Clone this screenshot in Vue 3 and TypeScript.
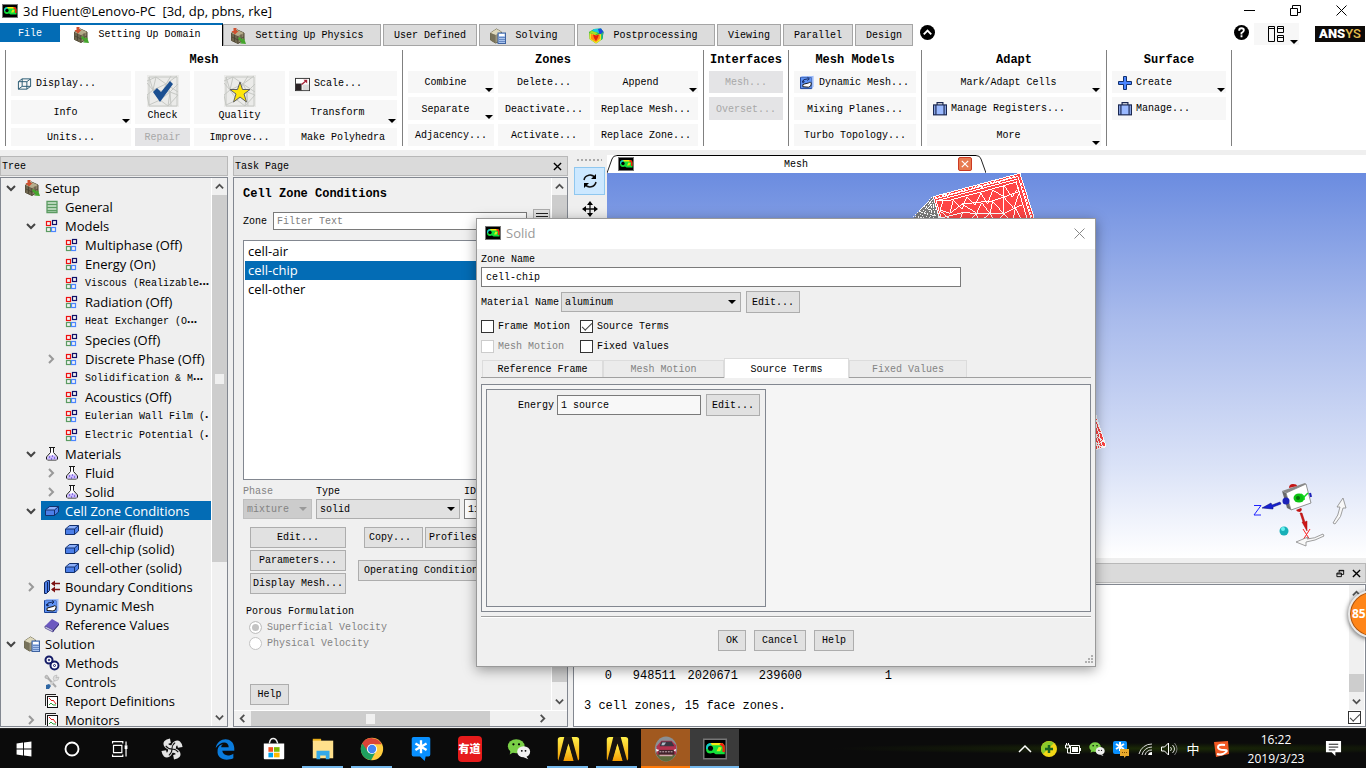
<script setup lang="ts">
import { ref } from 'vue'

interface RibbonButton { label: string; icon?: string; menu?: boolean; off?: boolean; big?: boolean }
interface RibbonGroup { title: string; kind: string; columns: RibbonButton[][] }
interface TreeRow { label: string; level: number; icon: string; state?: 'open' | 'closed'; dots?: string; selected?: boolean }

const tabs = [
  { label: 'Setting Up Physics', icon: 'setup', cls: 'physics' },
  { label: 'User Defined', icon: '', cls: 'user' },
  { label: 'Solving', icon: 'solution', cls: 'solving' },
  { label: 'Postprocessing', icon: 'post', cls: 'post' },
  { label: 'Viewing', icon: '', cls: 'viewing' },
  { label: 'Parallel', icon: '', cls: 'parallel' },
  { label: 'Design', icon: '', cls: 'design' },
]

const groups: RibbonGroup[] = [
  { title: 'Mesh', kind: 'mesh', columns: [
    [{ label: 'Display...', icon: 'wirebox' }, { label: 'Info', menu: true }, { label: 'Units...' }],
    [{ label: 'Check', icon: 'check', big: true }, { label: 'Repair', off: true }],
    [{ label: 'Quality', icon: 'quality', big: true }, { label: 'Improve...' }],
    [{ label: 'Scale...', icon: 'scale' }, { label: 'Transform', menu: true }, { label: 'Make Polyhedra' }],
  ] },
  { title: 'Zones', kind: 'zones', columns: [
    [{ label: 'Combine', menu: true }, { label: 'Separate', menu: true }, { label: 'Adjacency...' }],
    [{ label: 'Delete...' }, { label: 'Deactivate...' }, { label: 'Activate...' }],
    [{ label: 'Append', menu: true }, { label: 'Replace Mesh...' }, { label: 'Replace Zone...' }],
  ] },
  { title: 'Interfaces', kind: 'interfaces', columns: [[{ label: 'Mesh...', off: true }, { label: 'Overset...', off: true }]] },
  { title: 'Mesh Models', kind: 'models', columns: [[{ label: 'Dynamic Mesh...', icon: 'dynamic' }, { label: 'Mixing Planes...' }, { label: 'Turbo Topology...' }]] },
  { title: 'Adapt', kind: 'adapt', columns: [[{ label: 'Mark/Adapt Cells', menu: true }, { label: 'Manage Registers...', icon: 'case' }, { label: 'More', menu: true }]] },
  { title: 'Surface', kind: 'surface', columns: [[{ label: 'Create', icon: 'plus', menu: true }, { label: 'Manage...', icon: 'case' }]] },
]

const tree: TreeRow[] = [
  { label: 'Setup', level: 0, icon: 'setup', state: 'open' },
  { label: 'General', level: 1, icon: 'general' },
  { label: 'Models', level: 1, icon: 'models', state: 'open' },
  { label: 'Multiphase (Off)', level: 2, icon: 'models' },
  { label: 'Energy (On)', level: 2, icon: 'models' },
  { label: 'Viscous (Realizable', level: 2, icon: 'models', dots: '···' },
  { label: 'Radiation (Off)', level: 2, icon: 'models' },
  { label: 'Heat Exchanger (O', level: 2, icon: 'models', dots: '···' },
  { label: 'Species (Off)', level: 2, icon: 'models' },
  { label: 'Discrete Phase (Off)', level: 2, icon: 'models', state: 'closed' },
  { label: 'Solidification & M', level: 2, icon: 'models', dots: '···' },
  { label: 'Acoustics (Off)', level: 2, icon: 'models' },
  { label: 'Eulerian Wall Film (', level: 2, icon: 'models', dots: '·' },
  { label: 'Electric Potential (', level: 2, icon: 'models', dots: '·' },
  { label: 'Materials', level: 1, icon: 'flask', state: 'open' },
  { label: 'Fluid', level: 2, icon: 'flask', state: 'closed' },
  { label: 'Solid', level: 2, icon: 'flask', state: 'closed' },
  { label: 'Cell Zone Conditions', level: 1, icon: 'cell', state: 'open', selected: true },
  { label: 'cell-air (fluid)', level: 2, icon: 'cell' },
  { label: 'cell-chip (solid)', level: 2, icon: 'cell' },
  { label: 'cell-other (solid)', level: 2, icon: 'cell' },
  { label: 'Boundary Conditions', level: 1, icon: 'boundary', state: 'closed' },
  { label: 'Dynamic Mesh', level: 1, icon: 'dynamic' },
  { label: 'Reference Values', level: 1, icon: 'book' },
  { label: 'Solution', level: 0, icon: 'solution', state: 'open' },
  { label: 'Methods', level: 1, icon: 'methods' },
  { label: 'Controls', level: 1, icon: 'controls' },
  { label: 'Report Definitions', level: 1, icon: 'report' },
  { label: 'Monitors', level: 1, icon: 'report', state: 'closed' },
]

const zones = ['cell-air', 'cell-chip', 'cell-other']
const activeZone = ref('cell-chip')
const zoneName = ref('cell-chip')
const energy = ref('1 source')
const filterText = ref('')
const zoneId = ref('11')
const porous = ref('superficial')
const options = ref({ frame: false, source: true, mesh: false, fixed: false })
const scrollLock = ref(true)

const pages = [
  { label: 'Reference Frame', off: false },
  { label: 'Mesh Motion', off: true },
  { label: 'Source Terms', off: false },
  { label: 'Fixed Values', off: true },
]
const activePage = ref('Source Terms')

const apps = [
  { name: 'start', cls: 'sys' }, { name: 'cortana', cls: 'sys' }, { name: 'taskview', cls: 'sys' },
  { name: 'pinwheel', cls: 'wide' }, { name: 'edge', cls: '' }, { name: 'store', cls: '' },
  { name: 'folder', cls: 'running' }, { name: 'chrome', cls: 'running' }, { name: 'star', cls: '' },
  { name: 'youdao', cls: '' }, { name: 'wechat', cls: '' }, { name: 'ansys', cls: 'running' },
  { name: 'ansys', cls: 'running' }, { name: 'car', cls: 'alert' }, { name: 'fluent', cls: 'front' },
]
const tray = ['up', 'guard', 'battery', 'wechat', 'starchat', 'wifi', 'volume']
</script>

<template>
  <div class="desktop">
    <svg class="defs" aria-hidden="true">
      <defs>
        <linearGradient id="ansysGold" x1="0" y1="0" x2="0" y2="1"><stop offset="0" stop-color="#fff04a" /><stop offset="1" stop-color="#f39b00" /></linearGradient>
      </defs>
      <symbol id="i-fluent" viewBox="0 0 16 14"><rect width="16" height="14" fill="#777" /><rect x="1" y="1" width="14" height="12" fill="#000" /><path d="M2 7C2 4.500 3 3 6 3h6q2.500 0 2.500 3v4.500H8.500L7 9.500l-2 .5Q2 10 2 7z" fill="#14e03a" /><path d="M2 7C2 4 3 3 6 3l1 1Q3.500 4 3.500 7z" fill="#12c8c8" /><path d="M5 3h8v1.500H6z" fill="#f6ea12" /><path d="M12 3q2.500 0 2.500 3v3H13V5.500L11 4z" fill="#f5200c" /><path d="M10.500 5.500L9 8.500h2.500L12.500 6z" fill="#d9ee14" /><circle cx="5" cy="6.500" r="1.700" fill="#000" /></symbol>
      <symbol id="i-setup" viewBox="0 0 16 16"><path d="M1.500 5l6-3 6.500 3v7l-6 3.500-6.500-3z" fill="#8c8167" stroke="#4a432f" /><path d="M1.500 5l6.500 3v7.500l-6.500-3z" fill="#6d654e" /><path d="M1.500 5l6-3 6.500 3-6 3z" fill="#b6ad8c" /><path d="M8 8v7M2 9l6 3 6-3M4.500 6.500V14M11 6.500V13" stroke="#433d2c" fill="none" stroke-width=".7" /><path d="M3.500 0h3v3h2L5 6.500 1.500 3h2z" fill="#d0502f" /><path d="M9 9l4 2.500L14 10l2 6-6-.5 1.500-1.500L8 11z" fill="#45a52d" /></symbol>
      <symbol id="i-solution" viewBox="0 0 16 16"><path d="M.5 5l6-4 5 3v9l-6 2-5-3z" fill="#9b957c" stroke="#6b664d" /><path d="M.5 5l6-4 5 3-6 3z" fill="#ded9bc" /><path d="M5.500 7v8l-5-3V5z" fill="#77725a" /><rect x="8" y="5" width="7.500" height="10.500" fill="#a9c4ee" stroke="#3d62a0" /><path d="M9 7h5.500" stroke="#fff" stroke-width="2" /><path d="M9.500 9.500h5M9.500 11.500h5M9.500 13.500h5" stroke="#234e9b" stroke-dasharray="1 1" /></symbol>
      <symbol id="i-post" viewBox="0 0 16 16"><path d="M1 4l5-3 7-.5L15.500 4l-1 7L8 15.500 1.500 11z" fill="#25b648" /><path d="M6 1l7-.5L15.500 4 11 5 4 3z" fill="#18cbe0" /><path d="M10 1l3-.5L15.500 4l-1 6-3-4z" fill="#1c48d8" /><path d="M1 4l3-1 6 2-3 2z" fill="#a8e022" /><path d="M1.500 5L8 7l5-1v6l-5 3.500L1.500 11z" fill="#f3e41c" /><path d="M3 6l5 1.500 4-1v4L8 14l-5-3z" fill="#ff8a14" /><path d="M5 6.500l3 1 3-1-1 3-2 3.500-2-3z" fill="#e3200e" /><path d="M13 6l2-2-.5 7-1.500 1z" fill="#2bc76a" /></symbol>
      <symbol id="i-wirebox" viewBox="0 0 16 14"><path d="M1.500 4.500h9v8h-9zM5.500 1.500h9v8h-9zM1.500 4.500l4-3M10.500 4.500l4-3M1.500 12.500l4-3M10.500 12.500l4-3" fill="none" stroke="#24566f" /></symbol>
      <symbol id="i-net" viewBox="0 0 32 32"><rect width="32" height="32" fill="#ebebe9" /><path d="M0 6l9-4 10 7 11-8M2 2l4 13 13-6 12 8M0 20l6-5 7 10 6-16M2 30l11-5 8 6 10-11M0 20l2 10M13 25l10-8 8-8M9 2L6 15l17 2 1 14M23 17L19 9l5-8M2 2h28v29H2zM6 15L0 8M21 31l2-14M31 20l-8-3" fill="none" stroke="#c6c8c4" /></symbol>
      <symbol id="i-check" viewBox="0 0 32 32"><use href="#i-net" /><path d="M6 17l4-4 4 4L23 6l3 3-13 18z" fill="#1b4f91" /></symbol>
      <symbol id="i-quality" viewBox="0 0 32 32"><use href="#i-net" /><path d="M16 7l2.500 7.500H26l-6 4.500 2.500 8-6.500-5-6.500 5L12 19l-6-4.500h7.500z" fill="#ffe60a" stroke="#606060" /></symbol>
      <symbol id="i-scale" viewBox="0 0 16 14"><rect x=".5" y=".5" width="15" height="13" fill="#fff" stroke="#333" /><rect x="1" y="6" width="6" height="7" fill="#2a2224" /><rect x="8" y="7" width="7" height="6" fill="#dadada" /><path d="M7 7l5-4" stroke="#a32035" stroke-width="1.500" /><path d="M13 2v4L9 2z" fill="#a32035" /></symbol>
      <symbol id="i-dynamic" viewBox="0 0 16 16"><path d="M.5 2.500h12v12H.5z" fill="#5f93f5" stroke="#173f94" /><path d="M.5 2.500l2-1.500h12l-2 1.500zM12.500 2.500l2-2v12l-2 2z" fill="#9dbcfa" /><path d="M3 12.500q-1-3 2-3l4-1q3-2 3 1 0 3-3 3.500z" fill="#fff" stroke="#111" /><path d="M3 8l1-3 5-1M3 8L2.500 6M3 8l2-1M10 4L8 2.500M10 4L8 6" stroke="#14285c" fill="none" /></symbol>
      <symbol id="i-case" viewBox="0 0 12 12"><path d="M3.500 2.500v-2h5v2" fill="none" stroke="#1a2750" /><rect x=".5" y="2.500" width="11" height="8.500" fill="#9bbaff" stroke="#1a2750" /><path d="M2.500 2.500V11M9.500 2.500V11" stroke="#1a2750" /></symbol>
      <symbol id="i-plus" viewBox="0 0 14 14"><path d="M5.500.5h3v5h5v3h-5v5h-3v-5h-5v-3h5z" fill="#4b86ff" stroke="#12306e" /></symbol>
      <symbol id="i-general" viewBox="0 0 16 16"><path d="M3 2.500h10v11H3zM3 5.500h10M3 8.500h10M3 11.500h10" fill="#d3e8d4" stroke="#5b9b62" stroke-width="1.300" /></symbol>
      <symbol id="i-models" viewBox="0 0 16 16"><g fill="#f3f3f3" stroke-width="1.200"><rect x="2.500" y="3.500" width="4" height="4" stroke="#f01010" /><rect x="8.500" y="2.500" width="4" height="4" stroke="#101066" /><rect x="2.500" y="9.500" width="4" height="4" stroke="#5b9b62" /><rect x="7.500" y="9.500" width="4" height="4" stroke="#4b86ff" /></g></symbol>
      <symbol id="i-flask" viewBox="0 0 16 16"><path d="M6.500 2v4.500L2.500 11v2l1 1h9l1-1v-2l-4-4.500V2" fill="#fff" stroke="#1a1a1a" /><path d="M5 9.500h6l2 2v2H3v-2z" fill="#c9b8fb" /><path d="M5 1.500h6" stroke="#1a1a1a" /><path d="M5 11h1M8 10h1M10 12h1M7 13h1" stroke="#3a1ec8" /></symbol>
      <symbol id="i-cell" viewBox="0 0 16 16"><path d="M1.500 7l4-3.500h9V9l-4 3.500h-9z" fill="#4c7fe8" stroke="#12306e" /><path d="M2 7l4-3h8l-4 3z" fill="#8db0fa" /><path d="M10.500 7v5.500M1.500 7h9l4-3.500" stroke="#12306e" fill="none" /></symbol>
      <symbol id="i-boundary" viewBox="0 0 16 16"><path d="M.5 3.500l3-2h2v10l-3 3h-2z" fill="#4c7fe8" stroke="#10245c" /><path d="M3.500 3v10" stroke="#10245c" /><path d="M8 4.500h8M8 10.500h8" stroke="#7d1010" stroke-width="1.500" /><path d="M7 4.500l4-3v6zM7 10.500l4-3v6z" fill="#7d1010" /></symbol>
      <symbol id="i-book" viewBox="0 0 16 16"><path d="M1 9l7-7 7 4-6 7z" fill="#6b58c0" /><path d="M1 9l8 4v2l-8-4z" fill="#d9d9ee" stroke="#352a80" stroke-width=".7" /><path d="M9 13l6-7v2l-6 7z" fill="#352a80" /></symbol>
      <symbol id="i-methods" viewBox="0 0 16 16"><g fill="#fff" stroke="#141b66"><circle cx="5" cy="5" r="3.500" stroke-width="2" /><circle cx="5" cy="5" r=".8" /><circle cx="10.500" cy="10.500" r="4" stroke-width="2" /><circle cx="10.500" cy="10.500" r="1" /></g></symbol>
      <symbol id="i-controls" viewBox="0 0 16 16"><path d="M3 3l9 10" stroke="#aaa" stroke-width="2" /><path d="M1 2l2-1 2 3-1 1-3-1z" fill="#c4c4c4" stroke="#999" stroke-width=".5" /><path d="M14 3l-9 9" stroke="#d2d2d2" stroke-width="2" /><path d="M10 2l3-1-1 3 3-1-1 3-3 1-2-2z" fill="#ddd" stroke="#aaa" stroke-width=".5" /><path d="M2 11l3-1 2 2-2 3H2z" fill="#2f67a4" /></symbol>
      <symbol id="i-report" viewBox="0 0 16 16"><path d="M1.500 13V1.500H12" fill="none" stroke="#222" /><rect x="3.500" y="3.500" width="10" height="11" fill="#fff" stroke="#111" /><path d="M5 5l3 3 1-1 3 4" stroke="#e02020" fill="none" /><path d="M5 12l2-2 2 2h3" stroke="#31a13c" fill="none" /></symbol>
      <symbol id="i-start" viewBox="0 0 28 28"><path d="M6 8l7-1v6.500H6zM14 7l8-1v7.500h-8zM6 14.500h7V21l-7-1zM14 14.500h8V22l-8-1z" fill="#fff" /></symbol>
      <symbol id="i-cortana" viewBox="0 0 28 28"><circle cx="14" cy="14" r="7" fill="none" stroke="#fff" stroke-width="2" /></symbol>
      <symbol id="i-taskview" viewBox="0 0 28 28"><path d="M7 10h9v8H7zM6 8V6h11v2M6 20v2h11v-2M20.500 6v4M20.500 14v8" fill="none" stroke="#fff" stroke-width="1.300" /><rect x="19" y="10" width="3" height="4" fill="#fff" /></symbol>
      <symbol id="i-pinwheel" viewBox="0 0 28 28"><g fill="none" stroke="#e4e4e4" stroke-width="6"><path d="M12 3.500Q4 5 7 9.500q2 3 7 2.500" /><path d="M24.500 12Q23 4 18.500 7q-3 2-2.500 7" /><path d="M16 24.500q8-1.500 5-6-2-3-7-2.500" /><path d="M3.500 16q1.500 8 6 5 3-2 2.500-7" /></g><path d="M14 14Q9 14 6 10M14 14q0-5 4-8M14 14q5 0 8 4M14 14q0 5-4 8" fill="none" stroke="#111" stroke-width="1.300" /></symbol>
      <symbol id="i-edge" viewBox="0 0 28 28"><path d="M4 13C6 1 23 0 24 13v3H11c1 6 8 6 12 3v5C14 28 5 24 6 16c0-4 3-7 6-7-2 1-2 2-2 3h8C18 5 9 5 4 13z" fill="#0a7bdc" /></symbol>
      <symbol id="i-store" viewBox="0 0 28 28"><path d="M9 8c1-7 7-7 9 0" fill="none" stroke="#eee" stroke-width="1.500" /><path d="M3 8h22v16q0 1-1 1H4q-1 0-1-1z" fill="#fff" /><path d="M8 12h5v5H8z" fill="#f25022" /><path d="M14 12h6v5h-6z" fill="#7fba00" /><path d="M8 18h5v5H8z" fill="#00a4ef" /><path d="M14 18h6v5h-6z" fill="#ffb900" /></symbol>
      <symbol id="i-folder" viewBox="0 0 28 28"><path d="M3 3h9v3H3z" fill="#e9ae1a" /><path d="M3 5h22v19H3z" fill="#ffe08c" /><path d="M7 25v-9h14v9h-4v-4h-6v4z" fill="#33a9e8" /></symbol>
      <symbol id="i-chrome" viewBox="0 0 28 28"><circle cx="14" cy="14" r="12" fill="#ffcd40" /><path d="M14 14L3.500 8A12 12 0 0 0 13 26l5-9z" fill="#1fa05f" /><path d="M14 14l-4 3L3.500 8A12 12 0 0 1 24.500 9H14z" fill="#db4437" /><circle cx="14" cy="14" r="5.500" fill="#fff" /><circle cx="14" cy="14" r="4.500" fill="#4285f4" /></symbol>
      <symbol id="i-star" viewBox="0 0 28 28"><path d="M6 1h16q2 0 2 2v17q0 2-2 2h-3l-1 5-5-5H6q-2 0-2-2V3q0-2 2-2z" fill="#0990ff" /><path d="M14 4.500v14M8 8l12 7M20 8L8 15" stroke="#fff" stroke-width="2.500" /></symbol>
      <symbol id="i-wechat" viewBox="0 0 28 28"><ellipse cx="11" cy="11" rx="9" ry="7.500" fill="#79cf46" /><path d="M5 16l-1 4 5-3z" fill="#79cf46" /><ellipse cx="19" cy="17" rx="7" ry="6" fill="#f0f0f0" /><path d="M22 22l2 3-5-2z" fill="#f0f0f0" /><circle cx="8" cy="9" r="1.200" /><circle cx="14" cy="9" r="1.200" /><circle cx="17" cy="16" r="1" /><circle cx="21" cy="16" r="1" /></symbol>
      <symbol id="i-ansys" viewBox="0 0 28 28"><path d="M6 1h17q3 0 3 3v20q0 3-3 3H6q-3 0-3-3V4q0-3 3-3z" fill="url(#ansysGold)" /><path d="M10 1h8l7 26h-5L14.500 8 9 27H3.500z" fill="#171310" /><path d="M14.500 9l5 18H9.500z" fill="url(#ansysGold)" /></symbol>
      <symbol id="i-car" viewBox="0 0 28 28"><ellipse cx="14" cy="14" rx="12" ry="13.500" fill="#8a8f94" /><path d="M3 18h22q-3 9-11 9.500Q6 27 3 18z" fill="#5d6b3c" /><path d="M4 11l5-6h11l5 5v10H4z" fill="#b3324e" /><path d="M9 6h11l3 5H7z" fill="#3a3742" /><path d="M10 7h4l-2 3H9z" fill="#aebac6" /><path d="M6 15h17v5H6z" fill="#43232d" /><path d="M7 17h15" stroke="#d6c4c8" stroke-dasharray="2 1" /><path d="M3 14l4 1-3 2zM25 14l-3 1 2 2z" fill="#fff" /><path d="M7 21h14" stroke="#d0a8ae" stroke-width="1.500" /></symbol>
      <symbol id="i-up" viewBox="0 0 18 18"><path d="M3 12l6-6 6 6" fill="none" stroke="#fff" stroke-width="1.500" /></symbol>
      <symbol id="i-guard" viewBox="0 0 18 18"><circle cx="9" cy="9" r="8" fill="#f2d716" /><path d="M1 9a8 8 0 0 1 13-6L3 14q-2-2-2-5z" fill="#8ac92b" /><path d="M9 5v8M5 9h8" stroke="#176321" stroke-width="2.500" /></symbol>
      <symbol id="i-battery" viewBox="0 0 18 18"><path d="M6.500 5.500h9v8h-9zM16.500 8v3" fill="none" stroke="#fff" /><path d="M8 7h6v5H8z" fill="#fff" /><path d="M1.500 5h4v3h-4zM2.500 3v2M4.500 3v2M3.500 8v5h3" fill="none" stroke="#fff" /></symbol>
      <symbol id="i-starchat" viewBox="0 0 18 18"><rect x="1" y="1" width="14" height="13" rx="2" fill="#0990ff" /><path d="M8 2v9M4 4l8 5M12 4L4 9" stroke="#fff" stroke-width="2" /><path d="M8 9h9v7h-3l-2 2v-2H8z" fill="#e9a92b" /><path d="M10 12.500h5" stroke="#7b4b00" stroke-dasharray="1 1" /></symbol>
      <symbol id="i-wifi" viewBox="0 0 18 18"><g fill="none" stroke="#ddd"><path d="M3 14A13 13 0 0 1 16 4M6 15A10 10 0 0 1 16 7M9 15a7 7 0 0 1 7-5" /></g><path d="M12 15a4 4 0 0 1 4-3v3z" fill="#fff" /></symbol>
      <symbol id="i-volume" viewBox="0 0 18 18"><path d="M1.500 7h3l4-4v12l-4-4h-3z" fill="none" stroke="#fff" /><path d="M10.500 7q2 2 0 4M12.500 5q4 4 0 8" fill="none" stroke="#ddd" /><path d="M14.500 3q5 6 0 12" fill="none" stroke="#777" /></symbol>
      <symbol id="i-sogou" viewBox="0 0 18 18"><path d="M2 2l14-1 1 13-13 3z" fill="#f15a24" /><path d="M13 5Q6 4 6 7t6 3-1 4q-3 1-6 0" fill="none" stroke="#fff" stroke-width="2" /></symbol>
      <symbol id="i-x" viewBox="0 0 10 10"><path d="M1 1l8 8M9 1L1 9" stroke="currentColor" stroke-width="1.500" /></symbol>
      <symbol id="i-chev" viewBox="0 0 10 10"><path d="M1 3l4 4 4-4" fill="none" stroke="currentColor" stroke-width="2" /></symbol>
    </svg>

    <header class="titlebar">
      <svg class="app-icon"><use href="#i-fluent" /></svg>
      <h1>3d Fluent@Lenovo-PC&nbsp; [3d, dp, pbns, rke]</h1>
      <div class="win-buttons">
        <button aria-label="Minimize"><svg viewBox="0 0 11 11"><path d="M0 5.500h11" stroke="#000" /></svg></button>
        <button aria-label="Restore"><svg viewBox="0 0 11 11"><path d="M.5 3.500h7v7h-7zM2.500 3V.5h8v7H8" fill="none" stroke="#000" /></svg></button>
        <button aria-label="Close"><svg viewBox="0 0 11 11"><path d="M.5.5l10 10M10.500.5l-10 10" stroke="#000" /></svg></button>
      </div>
    </header>

    <nav class="tabs">
      <button class="file">File</button>
      <button class="tab current"><svg class="i16"><use href="#i-setup" /></svg>Setting Up Domain</button>
      <button v-for="t in tabs" :key="t.label" class="tab" :class="t.cls">
        <svg v-if="t.icon" class="i16"><use :href="'#i-' + t.icon" /></svg>{{ t.label }}
      </button>
      <button class="round" aria-label="Collapse ribbon"><svg viewBox="0 0 16 16"><circle cx="8" cy="8" r="8" /><path d="M4 10l4-4 4 4" fill="none" stroke="#fff" stroke-width="2" /></svg></button>
      <span class="grow"></span>
      <button class="round" aria-label="Help"><svg viewBox="0 0 16 16"><circle cx="8" cy="8" r="8" /><path d="M5.500 6q0-2.500 2.500-2.500t2.500 2Q10.500 7 8 8.500V10M8 11v2" fill="none" stroke="#fff" stroke-width="2" /></svg></button>
      <button class="layout menu" aria-label="Arrange"><svg viewBox="0 0 16 16"><path d="M.5.5h6v15h-6zM.5 2.500h6M9.500.5h6v6h-6zM9.500 9.500h6v6h-6zM9.500 2.500h6M9.500 11.500h6" fill="none" stroke="#000" /></svg></button>
      <span class="brand"><b>ANS</b><b class="gold">YS</b></span>
    </nav>

    <section class="ribbon">
      <div v-for="g in groups" :key="g.title" class="group" :class="g.kind">
        <h2>{{ g.title }}</h2>
        <div class="cols">
          <div v-for="(c, i) in g.columns" :key="i" class="col" :class="{ two: c[0].big }">
            <button v-for="b in c" :key="b.label" :disabled="b.off" :class="{ menu: b.menu, big: b.big, iconed: b.icon && !b.big }">
              <svg v-if="b.icon" :class="['ri', b.icon]"><use :href="'#i-' + b.icon" /></svg>{{ b.label }}
            </button>
          </div>
        </div>
      </div>
      <div class="group last"></div>
    </section>

    <main class="work">
      <aside class="tree-dock">
        <div class="dock-head"><span>Tree</span></div>
        <div class="tree-box">
          <ul>
            <li v-for="(r, i) in tree" :key="i" :class="['l' + r.level, { mono: r.dots, selected: r.selected }]">
              <span class="arrow" :class="r.state"><svg v-if="r.state"><use href="#i-chev" /></svg></span>
              <span class="node"><svg class="i16"><use :href="'#i-' + r.icon" /></svg><span class="t">{{ r.label }}<b v-if="r.dots">{{ r.dots }}</b></span></span>
            </li>
          </ul>
          <div class="vscroll"><svg class="flip"><use href="#i-chev" /></svg><i class="thumb grip tree-thumb"></i><svg><use href="#i-chev" /></svg></div>
        </div>
      </aside>

      <section class="task-dock">
        <div class="dock-head"><span>Task Page</span><button aria-label="Close task page"><svg><use href="#i-x" /></svg></button></div>
        <div class="task-box">
          <form class="task" @submit.prevent>
            <h2>Cell Zone Conditions</h2>
            <div class="filter"><label for="filter">Zone</label><input id="filter" v-model="filterText" placeholder="Filter Text"><button type="button" aria-label="List options"><svg viewBox="0 0 12 12"><path d="M0 1.500h12M0 4.500h12M0 7.500h12" stroke="#222" /></svg></button></div>
            <ul class="zones"><li v-for="z in zones" :key="z" :class="{ on: z === activeZone }" @click="activeZone = z">{{ z }}</li></ul>
            <div class="triple">
              <div class="f phase"><label for="phase">Phase</label><span class="sel off"><select id="phase" disabled><option>mixture</option></select></span></div>
              <div class="f type"><label for="type">Type</label><span class="sel"><select id="type"><option>solid</option></select></span></div>
              <div class="f"><label for="zid">ID</label><input id="zid" v-model="zoneId"></div>
            </div>
            <div class="actions">
              <div class="left"><button class="btn">Edit...</button><button class="btn">Parameters...</button><button class="btn">Display Mesh...</button></div>
              <div class="right"><div class="pair"><button class="btn copy">Copy...</button><button class="btn prof">Profiles...</button></div><button class="btn oper">Operating Conditions...</button></div>
            </div>
            <fieldset disabled>
              <legend>Porous Formulation</legend>
              <label><input v-model="porous" type="radio" name="porous" value="superficial"><span>Superficial Velocity</span></label>
              <label><input v-model="porous" type="radio" name="porous" value="physical"><span>Physical Velocity</span></label>
            </fieldset>
            <button class="btn help">Help</button>
          </form>
          <div class="vscroll"><svg class="flip"><use href="#i-chev" /></svg><i class="thumb task-thumb"></i><svg><use href="#i-chev" /></svg></div>
          <div class="hscroll"><svg class="toleft"><use href="#i-chev" /></svg><i class="thumb grip"></i><span class="grow"></span><svg class="toright"><use href="#i-chev" /></svg></div>
        </div>
      </section>

      <section class="right-side">
        <div class="graphics">
          <div class="view-tools">
            <span class="dots"></span>
            <button class="active" aria-label="Rotate view"><svg viewBox="0 0 16 16"><path d="M2 7a6 6 0 0 1 11-2M14 9a6 6 0 0 1-11 2" fill="none" stroke="#111" stroke-width="1.500" /><path d="M14 1v5H9zM2 15v-5h5z" /></svg></button>
            <button aria-label="Pan view"><svg viewBox="0 0 16 16"><path d="M8 2v12M2 8h12" stroke="#111" stroke-width="1.300" /><path d="M8 0l3 4H5zM8 16l3-4H5zM0 8l4-3v6zM16 8l-4-3v6z" /></svg></button>
          </div>
          <div class="view">
            <div class="view-tab">
              <svg class="edge" viewBox="0 0 10 18"><path d="M0 18L5 4q1-3.500 5-3.500V18z" fill="#fff" /><path d="M0 18L5 4q1-3.500 5-3.500" fill="none" stroke="#222" /></svg>
              <div class="mid"><svg class="app-icon"><use href="#i-fluent" /></svg><span>Mesh</span><button aria-label="Close Mesh"><svg><use href="#i-x" /></svg></button></div>
              <svg class="edge flipx" viewBox="0 0 10 18"><path d="M0 18L5 4q1-3.500 5-3.500V18z" fill="#fff" /><path d="M0 18L5 4q1-3.500 5-3.500" fill="none" stroke="#222" /></svg>
            </div>
            <div class="canvas">
              <svg class="model" viewBox="0 0 520 300" shape-rendering="crispEdges">
                <g transform="translate(193 -23) scale(.3333)" fill="none" stroke="#fff" stroke-width="3">
                  <path d="M398 140L330 215h90z" fill="#7b7b7b" stroke="none" />
                  <path d="M398 140L330 212M398 148l-52 64M398 156l-40 56M400 162l-28 50M402 168l-16 44M406 176l-6 36" stroke-dasharray="5 3" />
                  <path d="M386 155l18 15M372 170l36 18M358 185l54 14M345 200l60 8" stroke-dasharray="4 4" />
                  <path d="M400 140L660 70l46 145H418z" fill="#ff4545" stroke="none" />
                  <path d="M400 140L660 70M404 147L655 79M410 152L652 87M400 140l20 75M408 150l18 65M660 70l46 145M654 80l42 135M648 94l36 121" />
                  <path d="M406 143L650 78M664 100l36 115M403 150l20 65" stroke-dasharray="6 4" />
                  <path d="M412 153l38-2 30-9 38-10 32-8 33-9 32-9 33-10M430 150l-10 30 30 10 10-40 27 28 13-38 25 25 18-35 20 32 15-42 34 20 0-34 25 36 18-30" />
                  <path d="M420 182l20 18 47-12 43 2 40 0 40 2 34-18 24-10M450 190l37-28 43 28 15-32 25 32 8-36 32 36 2-48 30 34 14-45M487 162l58-6 33-3 34-12 44-16M412 205l28-5 30 15M487 188l-8 27M487 188l43 2-24 25M530 190l4 25M570 190l-30 25M570 190l14 25M612 192l-22 23M612 192l24 23M646 174l-8 41M646 174l22 41" />
                  <path d="M430 132l16 10M482 118l16 10M534 105l16 10M586 91l16 10" />
                  <path d="M886 790l32 98-32 12z" fill="#ff4545" stroke="none" />
                  <path d="M886 790l32 98-32 12M886 815l22 76M886 845l14 50M886 870l8 27M886 805l18 40-18 12 26 16-26 12 28 8" />
                </g>
              </svg>
              <svg class="triad" viewBox="0 0 100 70">
                <path d="M29 12l4 2 5 17-4-2z" fill="#6b6b6b" /><path d="M29 12l23-8 1 1-20 9z" fill="#8a8a8a" /><path d="M33 14l20-9 5 19-20 7z" fill="#fff" stroke="#777" stroke-width=".8" /><path d="M36 9q0-4 4-4t4 2zM43 31l5-2q2 2-1 4-3 0-4-2z" fill="#c31515" /><ellipse cx="46" cy="19" rx="5.500" ry="4.500" fill="#0cc412" /><circle cx="45" cy="19" r="2" fill="#05730a" /><path d="M48 15l3 3 4-4M51 18v3" fill="none" stroke="#10d81a" stroke-width="1.500" /><path d="M57 14l1 4" stroke="#1c22b8" stroke-width="2" />
                <circle cx="33" cy="22" r="3.500" fill="#1c22b8" /><path d="M9 29l9-5 1 2 8-3 1 2-8 3v2z" fill="#1520d0" stroke="#0b0b72" stroke-width=".5" /><path d="M1 26.500h7L1 36h7" fill="none" stroke="#1c20ff" /><path d="M47 34h2l3 9 2-1v10l-5-9 1 0z" fill="#cf1717" stroke="#a50d0d" stroke-width=".5" /><path d="M50 50l7 11M57 50l-7 11" stroke="#ff2020" />
                <circle cx="31" cy="52" r="4.500" fill="#18b0b8" /><circle cx="30" cy="50" r="2" fill="#66f0f0" /><path d="M80 44q6-8 7-16h-3l6-9 3 10h-3q-1 9-8 16zM70 55q-9 5-16 5l1-2-12 5 10 4v-4q9-1 18-6z" fill="#f8f8f8" stroke="#888" stroke-width=".8" />
              </svg>
            </div>
          </div>
        </div>
        <div class="console">
          <div class="dock-head"><span></span><button aria-label="Float console"><svg viewBox="0 0 10 10"><path d="M1 4.500h5v4H1zM1 5.500h5M3.500 4V1.500h5V6H6M3 2h6" fill="none" stroke="#000" /></svg></button><button aria-label="Close console"><svg><use href="#i-x" /></svg></button></div>
          <div class="console-box">
            <div class="log">
              <table><tbody><tr><td>0</td><td>948511</td><td>2020671</td><td>239600</td><td>1</td></tr></tbody></table>
              <p>3 cell zones, 15 face zones.</p>
            </div>
            <div class="side"><div class="vscroll"><svg class="flip"><use href="#i-chev" /></svg><i class="thumb console-thumb"></i><svg><use href="#i-chev" /></svg></div><input v-model="scrollLock" type="checkbox" aria-label="Scroll to end"></div>
          </div>
        </div>
      </section>
    </main>

    <section class="dialog" role="dialog" aria-labelledby="dlg-title">
      <header><svg class="app-icon"><use href="#i-fluent" /></svg><h2 id="dlg-title">Solid</h2><button aria-label="Close dialog"><svg viewBox="0 0 11 11"><path d="M.5.5l10 10M10.500.5l-10 10" stroke="#888" /></svg></button></header>
      <form class="dlg-body" @submit.prevent>
        <label class="zn" for="zone-name">Zone Name</label>
        <input id="zone-name" v-model="zoneName">
        <div class="mat"><label for="material">Material Name</label><span class="sel"><select id="material"><option>aluminum</option></select></span><button class="btn">Edit...</button></div>
        <div class="checks">
          <label><input v-model="options.frame" type="checkbox"><span>Frame Motion</span></label>
          <label><input v-model="options.source" type="checkbox"><span>Source Terms</span></label>
          <label class="dim"><input v-model="options.mesh" type="checkbox" disabled><span>Mesh Motion</span></label>
          <label><input v-model="options.fixed" type="checkbox"><span>Fixed Values</span></label>
        </div>
        <div class="pages"><button v-for="p in pages" :key="p.label" type="button" :disabled="p.off" :class="{ on: p.label === activePage }" @click="activePage = p.label">{{ p.label }}</button></div>
        <div class="panel"><div class="inner"><label for="energy">Energy</label><input id="energy" v-model="energy" readonly><button class="btn">Edit...</button></div></div>
        <hr>
        <div class="dlg-buttons"><button class="btn">OK</button><button class="btn">Cancel</button><button class="btn">Help</button></div>
      </form>
      <svg class="resize" viewBox="0 0 9 9"><path d="M7 1h2M4 4h2M7 4h2M1 7h2M4 7h2M7 7h2" stroke="#b0b0b0" stroke-width="2" /></svg>
    </section>

    <div class="badge">85</div>

    <footer class="taskbar">
      <button v-for="(a, i) in apps" :key="i" :class="a.cls" :aria-label="a.name">
        <span v-if="a.name === 'youdao'" class="youdao">有道</span>
        <svg v-else :class="a.name"><use :href="'#i-' + a.name" /></svg>
      </button>
      <span class="grow"></span>
      <div class="tray">
        <svg v-for="t in tray" :key="t"><use :href="'#i-' + t" /></svg>
        <span class="ime">中</span>
        <svg class="sogou"><use href="#i-sogou" /></svg>
      </div>
      <div class="clock"><span>16:22</span><span>2019/3/23</span></div>
      <button class="notes" aria-label="Notifications"><svg viewBox="0 0 18 18"><path d="M1 1h16v12h-6v4l-4-4H1z" fill="#fff" /><path d="M4 4.500h10M4 7.500h10M4 10.500h7" stroke="#111" /></svg></button>
    </footer>
  </div>
</template>

<style>
body { margin: 0; overflow: hidden; }
</style>

<style scoped>
.desktop { position: relative; display: flex; flex-direction: column; height: 100vh; overflow: hidden; background: #efefef; color: #000; font: 10px/14px "Liberation Mono", "Noto Sans CJK SC", monospace; }
.desktop *, .desktop *::after, .desktop *::before { box-sizing: border-box; }
.defs { position: absolute; width: 0; height: 0; }
button, input, select { font: inherit; color: inherit; margin: 0; padding: 0; border: 0; border-radius: 0; background: none; }
h1, h2, ul, p, hr, fieldset, legend { margin: 0; padding: 0; border: 0; font-weight: normal; list-style: none; }
svg { display: block; flex: none; }
.grow { flex: 1; }
.i16 { width: 16px; height: 16px; }
.app-icon { width: 16px; height: 14px; }

.titlebar { display: flex; align-items: center; height: 23px; background: #fff; padding: 0 2px 2px; }
.titlebar h1 { flex: 1; margin-left: 5px; font: 13px/20px "Open Sans", sans-serif; }
.win-buttons { display: flex; }
.win-buttons button { display: flex; justify-content: center; width: 46px; }
.win-buttons svg { width: 11px; height: 11px; }

.tabs { display: flex; align-items: flex-start; height: 23px; background: #fff; }
.tabs .file { width: 60px; height: 19px; padding-top: 2px; background: #036cb5; color: #fff; }
.tab { display: flex; align-items: center; justify-content: center; gap: 9px; height: 22px; margin: 1px 2px 0 0; padding-top: 1px; background: #dcdcdc; border: 1px solid #a5a5a5; white-space: nowrap; }
.tab.current { height: 23px; width: 163px; margin: 0; padding: 0 8px 2px 0; background: #fff; border: 0; border-top: 2px solid #036cb5; border-right: 1px solid #000; }
.physics { width: 158px; padding-right: 10px; }
.user { width: 94px; }
.solving { width: 96px; padding-right: 6px; }
.tab.post { width: 138px; padding-right: 6px; }
.viewing { width: 64px; }
.parallel { width: 70px; }
.design { width: 58px; }
.round { width: 15px; height: 15px; margin: 2px 5px; }
.round svg { width: 15px; height: 15px; }
.layout { width: 45px; height: 22px; padding-left: 14px; background: #f7f7f7; }
.layout svg { width: 16px; height: 16px; }
.brand { width: 50px; height: 16px; margin: 3px 1px 0 16px; background: #0d0a08; color: #fff; text-align: center; font: 900 13px/16px "Roboto", sans-serif; }
.brand .gold { color: #e6bd4c; font-weight: 500; }

.menu { position: relative; }
.menu::after { content: ""; position: absolute; right: 1px; bottom: 1px; border: 4px solid transparent; border-top-color: #000; border-bottom: 0; }

.ribbon { display: flex; height: 104px; padding: 4px 0 4px 5px; background: #fff; }
.group { padding: 0 5px; border-left: 1px solid #808080; }
.group h2 { height: 21px; text-align: center; font: bold 12px/20px "Liberation Mono", monospace; white-space: nowrap; margin: 0 -4px; }
.cols { display: grid; gap: 4px; }
.col { display: grid; gap: 4px; grid-template-rows: 22px 23px 22px; }
.mesh .col { grid-template-rows: 25px 24px 18px; }
.mesh .col.two { grid-template-rows: 53px 18px; }
.mesh .cols { grid-template-columns: 120px 55px 91px 108px; }
.zones .cols { grid-template-columns: 86px 92px 104px; }
.interfaces .cols { grid-template-columns: 74px; }
.models .cols { grid-template-columns: 122px; }
.adapt .cols { grid-template-columns: 174px; }
.surface .cols { grid-template-columns: 114px; }
.col button { display: flex; align-items: center; justify-content: center; padding-top: 2px; background: #f7f7f7; white-space: nowrap; }
.col button.menu { padding-right: 11px; }
.col button.iconed { justify-content: flex-start; gap: 4px; padding-left: 6px; padding-top: 1px; }
.col button.big { flex-direction: column; gap: 2px; }
.col button:disabled { background: #e4e4e6; color: #a8a8a8; }
.ri { width: 14px; height: 14px; }
.ri.check, .ri.quality { width: 32px; height: 32px; }
.ri.wirebox { width: 15px; height: 14px; }
.ri.scale, .ri.dynamic { width: 15px; height: 15px; }

.work { display: flex; flex: 1; min-height: 0; gap: 5px; padding: 6px 0 1px; }
.dock-head { display: flex; align-items: center; height: 20px; padding: 0 5px 0 1px; background: #dadada; border: 1px solid #b8b8b8; }
.dock-head span { flex: 1; padding-top: 1px; }
.dock-head button { margin-left: 7px; }
.dock-head svg { width: 9px; height: 9px; }
.tree-dock { display: flex; flex-direction: column; width: 228px; gap: 1px; }
.tree-box { display: flex; flex: 1; min-height: 0; border: 1px solid #828790; }
.tree-box ul { flex: 1; overflow: hidden; }
.tree-box li { display: flex; align-items: center; height: 19px; font: 13px/18px "Open Sans", sans-serif; white-space: nowrap; }
.tree-box li.mono { font: 10px/16px "Liberation Mono", monospace; }
.mono .t { display: flex; padding-top: 2px; }
.mono b { font: bold 12px/16px "Noto Sans", sans-serif; }
.l1 { padding-left: 20px; }
.l2 { padding-left: 40px; }
.arrow { flex: none; width: 20px; padding-left: 5px; color: #444; }
.arrow svg { width: 10px; height: 10px; }
.arrow.closed svg { transform: rotate(-90deg); color: #999; }
.node { display: flex; flex: 1; align-items: center; height: 19px; gap: 5px; padding-left: 3px; }
.selected .node { background: #036cb5; color: #fff; }

.vscroll { display: flex; flex-direction: column; align-items: center; flex: none; width: 16px; padding: 4px 0; background: #f0f0f0; color: #505050; border-left: 1px solid #fff; }
.vscroll svg, .hscroll svg { width: 9px; height: 9px; }
.flip { transform: rotate(180deg); }
.thumb { display: flex; align-items: center; justify-content: center; background: #cdcdcd; }
.vscroll .thumb { width: 15px; margin: 4px 0 auto; }
.grip::after { content: ""; width: 9px; height: 10px; background: #f0f0f0; }
.tree-thumb { height: 68%; }
.task-thumb { height: 487px; }
.vscroll .console-thumb { height: 18px; margin: auto 0 5px; }
.hscroll { display: flex; align-items: center; height: 16px; padding: 0 20px 0 4px; background: #f0f0f0; border-top: 1px solid #fff; grid-column: 1 / 3; color: #505050; }
.hscroll .thumb { width: 239px; height: 15px; margin-left: 4px; }
.toleft { transform: rotate(90deg); }
.toright { transform: rotate(-90deg); }

.task-dock { display: flex; flex-direction: column; width: 335px; gap: 1px; }
.task-box { display: grid; grid-template: 1fr 16px / 1fr 16px; flex: 1; min-height: 0; border: 1px solid #828790; }
.task { overflow: hidden; padding: 0 0 0 9px; background: #f0f0f0; min-width: 0; }
.task h2 { height: 30px; font: bold 12px/32px "Liberation Mono", monospace; }
.filter { display: flex; align-items: center; height: 18px; margin-top: 4px; white-space: nowrap; }
.filter label { width: 30px; padding-top: 1px; }
.filter input { width: 254px; height: 18px; padding: 1px 3px 0; background: #fff; border: 1px solid #7a7a7a; }
.filter input::placeholder { color: #808080; opacity: 1; }
.filter button { width: 17px; height: 24px; margin-left: 6px; padding: 0 0 6px 2px; background: #e1e1e1; border: 1px solid #adadad; }
.filter svg { width: 12px; height: 12px; }
.task .zones { width: 300px; height: 240px; margin-top: 10px; padding: 1px; background: #fff; border: 1px solid #828790; }
.task .zones li { padding-left: 3px; font: 13px/19px "Open Sans", sans-serif; }
.task .zones li.on { background: #036cb5; color: #fff; }
.triple { display: flex; gap: 4px; height: 40px; }
.f label { display: block; height: 19px; line-height: 24px; }
.f input { width: 50px; height: 20px; padding: 1px 0 0 3px; background: #fff; border: 1px solid #7a7a7a; }
.phase { width: 69px; color: #838383; }
.type { width: 144px; }
.sel { position: relative; display: block; height: 20px; }
.sel::after { content: ""; position: absolute; right: 5px; top: 8px; border: 4px solid transparent; border-top: 4px solid #000; border-bottom: 0; pointer-events: none; }
.sel.off::after { border-top-color: #999; }
.sel select { appearance: none; width: 100%; height: 100%; padding: 1px 0 0 3px; background: #e1e1e1; border: 1px solid #adadad; opacity: 1; }
.sel.off select { background: #ccc; border-color: #bfbfbf; color: #838383; }
.btn { height: 21px; padding-top: 1px; background: #e1e1e1; border: 1px solid #adadad; white-space: nowrap; }
.actions { display: flex; gap: 12px; margin: 7px 0 0 7px; }
.left { display: flex; flex-direction: column; gap: 2px; width: 96px; }
.right { display: flex; flex-direction: column; gap: 12px; }
.pair { display: flex; gap: 2px; padding-left: 6px; }
.copy { width: 59px; text-align: left; padding-left: 4px; }
.prof { width: 74px; }
.oper { width: 150px; }
.task fieldset { margin: 9px 0 0 3px; padding-left: 3px; }
.task legend { height: 16px; margin-left: -3px; line-height: 18px; }
.task fieldset label { display: flex; align-items: center; gap: 5px; height: 16px; color: #838383; }
.task fieldset label span { padding-top: 2px; }
.task fieldset input { appearance: none; width: 13px; height: 13px; border: 1px solid #c3c3c3; border-radius: 50%; background: #fff; }
.task fieldset input:checked { border: 1px solid #c3c3c3; background: #c3c3c3; box-shadow: inset 0 0 0 2px #fff; }
.btn.help { width: 39px; margin: 33px 0 0 7px; }

.right-side { display: flex; flex-direction: column; flex: 1; min-width: 0; gap: 5px; }
.graphics { display: flex; flex: 1; min-height: 0; margin-top: -1px; }
.view-tools { width: 34px; padding: 4px 2px 0 1px; }
.dots { display: block; height: 8px; margin: 0 3px; background: radial-gradient(circle at 1px 1px, #aaa 1px, transparent 1px) 0 0 / 4px 12px repeat-x; }
.view-tools button { display: flex; align-items: center; justify-content: center; width: 31px; height: 28px; }
.view-tools .active { background: #cce8ff; border: 1px solid #8fc7ef; }
.view-tools svg { width: 16px; height: 16px; }
.view { display: flex; flex-direction: column; flex: 1; min-width: 0; }
.view-tab { display: flex; height: 18px; background: #fff; }
.view-tab .edge { width: 10px; height: 18px; }
.flipx { transform: scaleX(-1); }
.mid { display: flex; align-items: center; width: 359px; padding: 0 3px 2px 1px; border-top: 1px solid #000; }
.mid span { flex: 1; text-align: center; padding-top: 3px; }
.mid button { width: 14px; height: 14px; margin-right: 1px; padding: 2px; background: #e77a50; border: 1px solid #cc3a22; border-radius: 2px; color: #fff; }
.mid button svg { width: 8px; height: 8px; }
.canvas { position: relative; flex: 1; min-height: 0; overflow: hidden; background: linear-gradient(#6b8ce0, #a9bbec 38%, #dae2f7 76%, #fff); }
.model { position: absolute; left: 0; top: 0; width: 520px; height: 300px; }
.triad { position: absolute; right: 13px; bottom: 5px; width: 100px; height: 78px; }
.console { height: 164px; display: flex; flex-direction: column; gap: 1px; }
.console .dock-head { padding-right: 4px; }
.console-box { display: flex; flex: 1; border: 1px solid #828790; background: #fff; font-size: 12px; line-height: 15px; }
.log { flex: 1; padding: 84px 0 0 10px; }
.log table { border-collapse: collapse; table-layout: fixed; }
.log td { padding: 0; text-align: right; }
.log td:nth-child(1) { width: 28px; }
.log td:nth-child(2) { width: 64px; }
.log td:nth-child(3) { width: 62px; }
.log td:nth-child(4) { width: 64px; }
.log td:nth-child(5) { width: 90px; }
.log p { margin-top: 15px; }
.side { display: flex; flex-direction: column; width: 17px; align-items: flex-start; }
.side .vscroll { flex: 1; }
input[type="checkbox"] { appearance: none; flex: none; width: 13px; height: 13px; background: #fff; border: 1px solid #333; }
input[type="checkbox"]:disabled { border-color: #ccc; }
input[type="checkbox"]:checked::after { content: ""; display: block; width: 10px; height: 5px; margin: 2px 0 0 1px; border: solid #444; border-width: 0 0 1px 1px; transform: rotate(-45deg); }
.side input { margin: 1px 0 2px; }

.dialog { position: absolute; left: 476px; top: 218px; width: 620px; background: #f0f0f0; border: 1px solid #999; box-shadow: 0 3px 12px rgba(0, 0, 0, .38); }
.dialog header { display: flex; align-items: center; height: 30px; padding: 0 10px 2px 8px; background: #fff; }
.dialog h2 { flex: 1; margin-left: 5px; color: #999; font: 13px/20px "Open Sans", sans-serif; }
.dialog header button svg { width: 11px; height: 11px; }
.dlg-body { padding: 0 4px 15px; }
.zn { display: block; height: 18px; line-height: 21px; }
#zone-name { display: block; width: 480px; height: 20px; padding: 1px 0 0 4px; background: #fff; border: 1px solid #7a7a7a; }
.mat { display: flex; align-items: center; margin-top: 4px; }
.mat label { width: 80px; padding-top: 2px; }
.mat .sel { width: 180px; margin-right: 5px; }
.mat .btn, .inner .btn { width: 54px; height: 22px; }
.checks { display: grid; grid-template-columns: 99px 1fr; grid-auto-rows: 20px; margin-top: 3px; }
.checks label { display: flex; align-items: center; gap: 4px; }
.checks span { padding-top: 2px; }
.dim { color: #838383; }
.pages { display: flex; align-items: flex-end; height: 20px; margin-top: 2px; padding-left: 1px; border-bottom: 1px solid #a0a0a0; }
.pages button { width: 121px; height: 17px; padding-top: 2px; background: #efefef; border: 1px solid #dcdcdc; border-bottom: 0; }
.pages button:disabled { color: #838383; background: #ebebeb; }
.pages .on { width: 125px; height: 20px; margin-bottom: -1px; background: #fff; }
.pages button:last-child { width: 118px; }
.panel { height: 228px; margin-top: 6px; padding: 4px; border: 1px solid #828790; background: #f5f5f5; }
.inner { display: flex; align-items: flex-start; width: 280px; height: 218px; padding: 4px 5px 0 31px; border: 1px solid #828790; background: #f0f0f0; }
.inner label { width: 39px; line-height: 24px; }
.inner input { width: 144px; height: 20px; margin: 1px 5px 0 0; padding: 1px 0 0 3px; background: #f8f8f8; border: 1px solid #7a7a7a; }
.dlg-body hr { height: 2px; margin: 4px 0 12px; border-top: 1px solid #a0a0a0; background: #fff; }
.dlg-buttons { display: flex; justify-content: center; gap: 8px; }
.dlg-buttons .btn { padding: 1px 7px 0; }
.resize { position: absolute; right: 2px; bottom: 2px; width: 9px; height: 9px; }

.badge { position: absolute; right: -30px; top: 590px; width: 48px; height: 48px; padding-left: 2px; border: 2px solid #e8e8e8; border-radius: 50%; background: #ff8518; box-shadow: 0 1px 5px #555, inset 0 0 0 1px #a55518; color: #fff; font: bold 12px/44px "Open Sans", sans-serif; }

.taskbar { display: flex; height: 40px; background: radial-gradient(ellipse at 85% 50%, #1b2a06, #0b0b0b 20%); color: #fff; border-top: 1px solid #222; }
.taskbar button { position: relative; display: flex; align-items: center; justify-content: center; width: 49px; }
.taskbar button.sys { width: 48px; }
.taskbar button.wide { width: 56px; }
.taskbar > button svg { width: 26px; height: 28px; }
.taskbar > button svg.pinwheel { width: 22px; height: 24px; }
.taskbar > button svg.fluent { width: 24px; height: 24px; }
.taskbar .running::after, .taskbar .front::after, .taskbar .alert::after { content: ""; position: absolute; left: 4px; right: 4px; bottom: 0; height: 2px; background: #76b9ed; }
.taskbar .alert { background: #a1591f; }
.taskbar .alert::after { left: 0; right: 0; background: #ff7b0a; }
.taskbar .front { background: #3b3b3b; }
.taskbar .front::after { left: 0; right: 0; }
.youdao { width: 24px; height: 26px; border-radius: 4px; background: #e61b1b; font: 900 11px/25px "Noto Sans CJK SC", sans-serif; text-align: center; }
.tray { display: flex; align-items: center; gap: 6px; }
.tray svg { width: 18px; height: 18px; }
.ime { width: 18px; font: 13px/18px "Noto Sans CJK SC", sans-serif; text-align: center; }
.tray .sogou { margin-left: 4px; }
.clock { display: flex; flex-direction: column; justify-content: center; width: 92px; text-align: center; font: 12px/19px "Open Sans", sans-serif; }
.taskbar .notes { width: 44px; padding-right: 22px; }
.taskbar > .notes svg { width: 17px; height: 17px; }
</style>
